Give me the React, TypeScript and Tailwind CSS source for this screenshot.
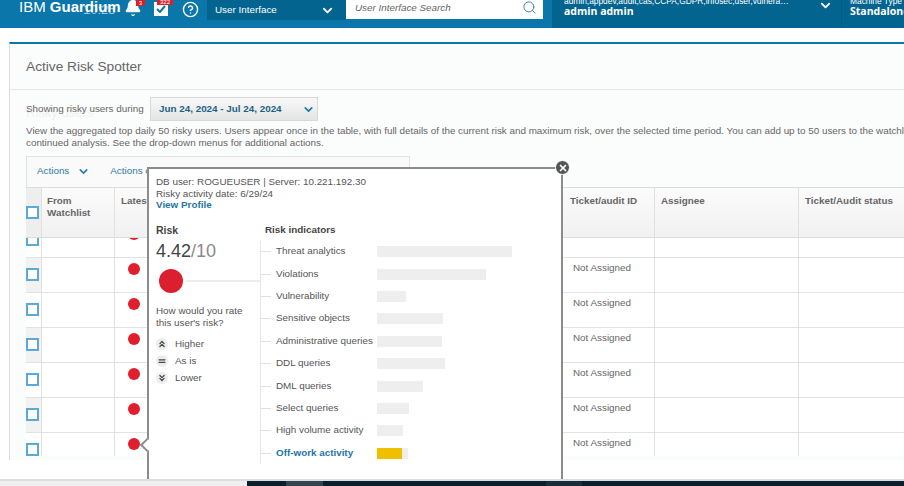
import React from "react";
import { ChevronDown, ChevronsUp, ChevronsDown, Equal, Search, HelpCircle, Bell, X } from "lucide-react";

const indicators = [
  { label: "Threat analytics", w: 135 },
  { label: "Violations", w: 109 },
  { label: "Vulnerability", w: 29 },
  { label: "Sensitive objects", w: 66 },
  { label: "Administrative queries", w: 65 },
  { label: "DDL queries", w: 68 },
  { label: "DML queries", w: 46 },
  { label: "Select queries", w: 32 },
  { label: "High volume activity", w: 26 },
];

const rows = [0, 1, 2, 3, 4, 5, 6];

function Check() {
  return <div className="w-[13px] h-[13px] border-2 border-[#5aa9d6] bg-white" />;
}

function Row({ index }: { index: number }) {
  const first = index === 0;
  const last = index === rows.length - 1;
  return (
    <div
      className={
        "grid grid-cols-[16px_73px_449px_91px_144px_1fr] bg-white border-b border-[#e2e2e2] " +
        (first ? "h-[35px] -mt-[15px]" : last ? "h-[24px]" : "h-[35px]")
      }
    >
      <div className={"border-r border-[#e2e2e2] pt-[10px] " + (index % 2 === 1 ? "bg-[#f2f2f2]" : "bg-white")}>
        <Check />
      </div>
      <div className="border-r border-[#e2e2e2]" />
      <div className="pl-[13px] pt-[5px]">
        <div className="w-[12px] h-[12px] rounded-full bg-[#e01e2d]" />
      </div>
      <div className="border-r border-[#e2e2e2] pl-[9px] pt-[4px] text-[9.85px] leading-[12px] text-[#666]">Not Assigned</div>
      <div className="border-r border-[#e2e2e2]" />
      <div />
    </div>
  );
}

function RateOption({ icon, label }: { icon: React.ReactNode; label: string }) {
  return (
    <div className="flex items-center h-[17px]">
      <span className="w-[12px] h-[12px] rounded-full bg-[#ececec] flex items-center justify-center text-[#444]">{icon}</span>
      <span className="ml-[7px] text-[9.85px] text-[#555]">{label}</span>
    </div>
  );
}

function Popover() {
  return (
    <div className="absolute left-[147px] top-[167px] w-[416px] h-[312px] bg-white border-t-2 border-x-2 border-[#8c8c8c] pl-[7px] pt-[7px] text-[9.85px] text-[#555]">
      <div className="leading-[11.5px] whitespace-nowrap">
        <div>DB user: ROGUEUSER | Server: 10.221.192.30</div>
        <div>Risky activity date: 6/29/24</div>
        <div className="font-bold text-[#1c75a8]">View Profile</div>
      </div>
      <div className="flex mt-[13px]">
        <div className="w-[104px] shrink-0">
          <div className="h-[12px] leading-[12px] font-bold text-[10.5px] text-[#444]">Risk</div>
          <div className="mt-[5px] h-[20px] leading-[20px] text-[18px] text-[#8a8a8a]">
            <span className="text-[#444]">4.42</span>/10
          </div>
          <div className="mt-[8px] flex items-center">
            <div className="ml-[3px] w-[24px] h-[24px] rounded-full bg-[#dc1f2e] shrink-0" />
            <div className="ml-[3px] w-[74px] h-[2px] bg-[#ececec]" />
          </div>
          <div className="mt-[12px] leading-[12px]">
            How would you rate<br />this user's risk?
          </div>
          <div className="mt-[7px]">
            <RateOption icon={<ChevronsUp size={10} strokeWidth={3} />} label="Higher" />
            <RateOption icon={<Equal size={10} strokeWidth={3} />} label="As is" />
            <RateOption icon={<ChevronsDown size={10} strokeWidth={3} />} label="Lower" />
          </div>
        </div>
        <div className="flex-1">
          <div className="pl-[5px] h-[12px] leading-[12px] font-bold text-[#444] whitespace-nowrap">Risk indicators</div>
          <div className="mt-[5px] border-l border-[#e6e6e6]">
            {indicators.map((it) => (
              <div key={it.label} className="flex items-center h-[22.4px]">
                <div className="w-[10px] h-px bg-[#e0e0e0] shrink-0" />
                <div className="w-[106px] pl-[5px] shrink-0 whitespace-nowrap">{it.label}</div>
                <div className="h-[11px] bg-[#eeeeee]" style={{ width: it.w }} />
              </div>
            ))}
            <div className="flex items-center h-[22.4px]">
              <div className="w-[10px] h-px bg-[#e0e0e0] shrink-0" />
              <div className="w-[106px] pl-[5px] shrink-0 whitespace-nowrap font-bold text-[#1c75a8]">Off-work activity</div>
              <div className="w-[31px] h-[11px] bg-[#eeeeee]">
                <div className="w-[25px] h-full bg-[#f0c000]" />
              </div>
            </div>
          </div>
        </div>
      </div>
      {/* pointer towards the red dot */}
      <div className="absolute left-[-7px] top-[271px] w-[10px] h-[10px] bg-white border-l-2 border-b-2 border-[#8c8c8c] rotate-45" />
      {/* close button */}
      <div className="absolute right-[-9px] top-[-9px] w-[15px] h-[15px] rounded-full bg-[#555] border border-white flex items-center justify-center">
        <X size={10} strokeWidth={4} className="text-white" />
      </div>
    </div>
  );
}

export default function App() {
  return (
    <div className="w-[904px] h-[486px] overflow-hidden relative bg-white flex flex-col font-['Liberation_Sans',Arial,sans-serif] text-[#666]">
      <header className="h-[28px] shrink-0 bg-[#0a76a9] flex text-white overflow-hidden">
        <div className="w-[207px] shrink-0 relative">
          <span className="absolute left-[19px] top-[-2px] whitespace-nowrap text-[15px] leading-[18px]">IBM <b>Guardium</b></span>
          <span className="absolute left-[83px] top-[2px] text-[13px] leading-[16px] opacity-60">10:25</span>
          <Bell size={18} fill="white" strokeWidth={1.5} className="absolute left-[124px] top-[-1px]" />
          <span className="absolute left-[136px] top-0 w-[9px] h-[6px] bg-[#d8202a] text-[6px] leading-[6px] text-center">3</span>
          <div className="absolute left-[154px] top-[2px] w-[14px] h-[14px] bg-white flex items-center justify-center">
            <svg width="10" height="8" viewBox="0 0 10 8"><path d="M1 4l3 3 5-6" stroke="#0a76a9" strokeWidth="2" fill="none" /></svg>
          </div>
          <span className="absolute left-[157px] top-0 w-[16px] h-[5px] bg-[#d8202a] text-[6px] leading-[5px] text-center">322</span>
          <HelpCircle size={17} strokeWidth={2} className="absolute left-[182px] top-[1px]" />
        </div>
        <div className="w-[139px] h-[20px] shrink-0 bg-[#03658f] flex items-center justify-between pl-[8px] pr-[11px] text-[9.85px]">
          <span>User Interface</span>
          <ChevronDown size={15} strokeWidth={3} />
        </div>
        <div className="w-[197px] h-[19px] shrink-0 bg-white flex items-center justify-between pl-[9px] pr-[6px] pb-[2px] text-[#666] italic text-[9.85px]">
          <span>User Interface Search</span>
          <Search size={15} className="text-[#2f7fa8] -mt-[2px]" strokeWidth={1.5} />
        </div>
        <div className="w-[9px] shrink-0" />
        <div className="w-[290px] shrink-0 bg-[#03658f] border-r border-[#055a80] relative">
          <span className="absolute left-[12px] top-[-4px] text-[8.4px] leading-[10px] whitespace-nowrap">admin,appdev,audit,cas,CCPA,GDPR,infosec,user,vulnera…</span>
          <span className="absolute left-[12px] top-[4px] text-[10.5px] font-bold whitespace-nowrap font-['Open_Sans',sans-serif] leading-[14px]">admin admin</span>
          <ChevronDown size={15} strokeWidth={3} className="absolute left-[266px] top-[-2px]" />
        </div>
        <div className="flex-1 bg-[#03658f] relative overflow-hidden">
          <span className="absolute left-[8px] top-[-4px] text-[8.4px] leading-[10px] whitespace-nowrap">Machine Type</span>
          <span className="absolute left-[8px] top-[4px] text-[10.5px] font-bold whitespace-nowrap font-['Open_Sans',sans-serif] leading-[14px]">Standalone</span>
        </div>
      </header>

      <main className="flex-1 min-h-0 pl-[9px] pt-[14px]">
        <section className="h-[418px] bg-[#fbfcfc] border-t-2 border-t-[#0a76a9] border-l border-l-[#dddddd] overflow-hidden">
          <div className="h-[46px] border-b border-[#e8e8e8] pl-[16px] pt-[1px] flex items-center text-[13.7px] text-[#666]">Active Risk Spotter</div>
          <div className="pl-[16px] pt-[7px]">
            <div className="relative flex items-center text-[9.85px] text-[#666]">
              <span className="absolute left-0 top-[8px] text-[13px] leading-[16px] text-[#f0f0f0]">Risky users</span>
              <span className="relative w-[124px]">Showing risky users during</span>
              <div className="w-[168px] h-[24px] bg-gradient-to-b from-[#f8f8f8] to-[#e4e4e4] border border-[#d8d8d8] flex items-center justify-between pl-[8px] pr-[2px] text-[#245f85] font-bold text-[9.85px]">
                <span>Jun 24, 2024 - Jul 24, 2024</span>
                <ChevronDown size={13} strokeWidth={3} className="text-[#1b75a8]" />
              </div>
            </div>
            <p className="mt-[4px] text-[9.85px] leading-[12px] text-[#666] whitespace-nowrap">
              View the aggregated top daily 50 risky users. Users appear once in the table, with full details of the current risk and maximum risk, over the selected time period. You can add up to 50 users to the watchlist for<br />
              continued analysis. See the drop-down menus for additional actions.
            </p>
          </div>

          <div className="ml-[16px] mt-[7px] w-[880px]">
            <div className="h-[31px] w-[384px] border border-b-0 border-[#e2e2e2] bg-[#fafafa] flex items-center pl-[10px] pb-[1px] text-[9.85px] text-[#2b7aa6]">
              <span>Actions</span>
              <ChevronDown size={13} strokeWidth={3} className="ml-[8px]" />
              <span className="ml-[20px]">Actions on</span>
            </div>
            <div className="grid grid-cols-[16px_73px_449px_91px_144px_1fr] h-[51px] border-y border-[#dcdcdc] bg-gradient-to-b from-[#fbfbfb] to-[#f1f1f1] text-[9.85px] font-bold text-[#666] leading-[12px]">
              <div className="border-r border-[#e0e0e0] bg-[#eeeeee] pt-[18px]"><Check /></div>
              <div className="border-r border-[#e0e0e0] pl-[5px] pt-[7px]">From<br />Watchlist</div>
              <div className="pl-[6px] pt-[7px]">Latest</div>
              <div className="border-r border-[#e0e0e0] pl-[6px] pt-[7px] whitespace-nowrap">Ticket/audit ID</div>
              <div className="border-r border-[#e0e0e0] pl-[6px] pt-[7px]">Assignee</div>
              <div className="pl-[6px] pt-[7px]">Ticket/Audit status</div>
            </div>
            <div className="h-[218px] overflow-hidden">
              {rows.map((i) => <Row key={i} index={i} />)}
            </div>
          </div>
        </section>
      </main>

      <div className="h-[2px] shrink-0 bg-[#dedede]" />
      <div className="h-[5px] shrink-0 flex bg-[#f0f0f0]">
        <div className="w-[247px]" />
        <div className="w-[39px] bg-[#07202c]" />
        <div className="w-[37px] bg-[#2f4650]" />
        <div className="w-[223px] bg-[#07202c]" />
        <div className="w-[36px] bg-[#142e3a]" />
        <div className="flex-1 bg-[#07202c]" />
      </div>

      <Popover />
    </div>
  );
}
